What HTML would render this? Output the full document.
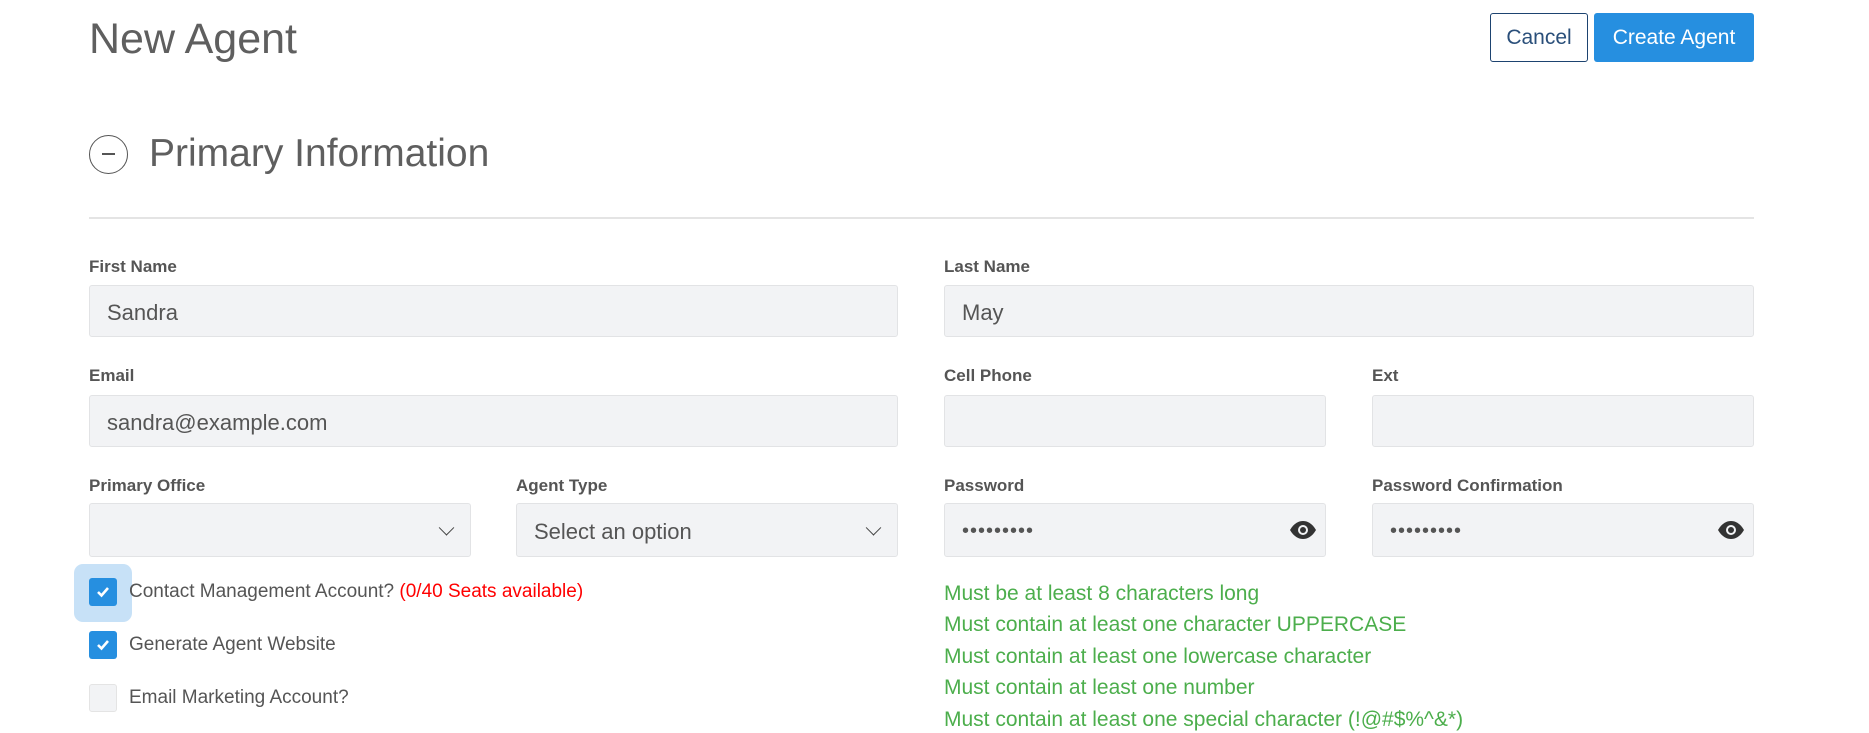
<!DOCTYPE html>
<html><head><meta charset="utf-8"><style>
*{box-sizing:border-box;margin:0;padding:0}
body{width:1869px;height:733px;background:#fff;font-family:"Liberation Sans",sans-serif;color:#555;position:relative;overflow:hidden}
.a{position:absolute}
.lbl{position:absolute;font-size:17px;font-weight:bold;color:#555;line-height:20px;transform:translateY(-9px)}
.inp{position:absolute;background:#f2f3f5;border:1px solid #e2e3e5;border-radius:3px;font-size:22px;color:#555;padding-left:17px;padding-top:3px;display:flex;align-items:center}
.chev{position:absolute;right:18px;top:50%;width:11px;height:11px;border-right:1.6px solid #444;border-bottom:1.6px solid #444;transform:translateY(-70%) rotate(45deg)}
.g{position:absolute;left:944px;font-size:21px;color:#4cae4c;line-height:24px;transform:translateY(-11px)}
.cb{position:absolute;left:89px;width:28px;height:28px;border-radius:3px;background:#268fe0;display:flex;align-items:center;justify-content:center}
.ct{position:absolute;left:129px;font-size:19px;color:#555;line-height:22px}
.eye{position:absolute;right:8px;top:50%;transform:translateY(-50%)}
</style></head><body>
<div class="a" style="left:89px;top:15px;font-size:43px;color:#5f5f5f;line-height:48px">New Agent</div>
<div class="a" style="left:1490px;top:13px;width:98px;height:49px;border:1px solid #1d4370;border-radius:3px;color:#2a4f7a;font-size:21px;display:flex;align-items:center;justify-content:center">Cancel</div>
<div class="a" style="left:1594px;top:13px;width:160px;height:49px;background:#268fe0;border-radius:3px;color:#fff;font-size:21px;display:flex;align-items:center;justify-content:center">Create Agent</div>
<div class="a" style="left:89px;top:135px;width:39px;height:39px;border:1.5px solid #555;border-radius:50%"></div>
<div class="a" style="left:102px;top:153px;width:13px;height:2px;background:#555"></div>
<div class="a" style="left:149px;top:132px;font-size:39px;color:#5f5f5f;line-height:44px">Primary Information</div>
<div class="a" style="left:89px;top:217px;width:1665px;height:2px;background:#e4e4e4"></div>

<div class="lbl" style="left:89px;top:266px">First Name</div>
<div class="inp" style="left:89px;top:285px;width:809px;height:52px">Sandra</div>
<div class="lbl" style="left:944px;top:266px">Last Name</div>
<div class="inp" style="left:944px;top:285px;width:810px;height:52px">May</div>

<div class="lbl" style="left:89px;top:375px">Email</div>
<div class="inp" style="left:89px;top:395px;width:809px;height:52px">sandra@example.com</div>
<div class="lbl" style="left:944px;top:375px">Cell Phone</div>
<div class="inp" style="left:944px;top:395px;width:382px;height:52px"></div>
<div class="lbl" style="left:1372px;top:375px">Ext</div>
<div class="inp" style="left:1372px;top:395px;width:382px;height:52px"></div>

<div class="lbl" style="left:89px;top:485px">Primary Office</div>
<div class="inp" style="left:89px;top:503px;width:382px;height:54px"><span class="chev"></span></div>
<div class="lbl" style="left:516px;top:485px">Agent Type</div>
<div class="inp" style="left:516px;top:503px;width:382px;height:54px">Select an option<span class="chev"></span></div>
<div class="lbl" style="left:944px;top:485px">Password</div>
<div class="inp" style="left:944px;top:503px;width:382px;height:54px;font-size:20px;letter-spacing:1px">•••••••••<svg class="eye" width="28" height="20" viewBox="0 0 28 20"><path d="M1 10C5 3 10 1 14 1s9 2 13 9c-4 7-9 9-13 9S5 17 1 10z" fill="#333"/><circle cx="14" cy="10" r="5" fill="#f2f3f5"/><circle cx="14" cy="10" r="3" fill="#333"/></svg></div>
<div class="lbl" style="left:1372px;top:485px">Password Confirmation</div>
<div class="inp" style="left:1372px;top:503px;width:382px;height:54px;font-size:20px;letter-spacing:1px">•••••••••<svg class="eye" width="28" height="20" viewBox="0 0 28 20"><path d="M1 10C5 3 10 1 14 1s9 2 13 9c-4 7-9 9-13 9S5 17 1 10z" fill="#333"/><circle cx="14" cy="10" r="5" fill="#f2f3f5"/><circle cx="14" cy="10" r="3" fill="#333"/></svg></div>

<div class="a" style="left:74px;top:564px;width:58px;height:58px;border-radius:9px;background:#c7e1f7"></div>
<div class="cb" style="top:578px"><svg width="14" height="12" viewBox="0 0 14 12"><path d="M2 6l3.5 3.5L12 2" stroke="#fff" stroke-width="2.6" fill="none"/></svg></div>
<div class="ct" style="top:581px">Contact Management Account? <span style="color:#f00">(0/40 Seats available)</span></div>
<div class="cb" style="top:631px"><svg width="14" height="12" viewBox="0 0 14 12"><path d="M2 6l3.5 3.5L12 2" stroke="#fff" stroke-width="2.6" fill="none"/></svg></div>
<div class="ct" style="top:634px">Generate Agent Website</div>
<div class="cb" style="top:684px;background:#f2f3f5;border:1px solid #e4e4e4"></div>
<div class="ct" style="top:687px">Email Marketing Account?</div>

<div class="g" style="top:593px">Must be at least 8 characters long</div>
<div class="g" style="top:624px">Must contain at least one character UPPERCASE</div>
<div class="g" style="top:656px">Must contain at least one lowercase character</div>
<div class="g" style="top:687px">Must contain at least one number</div>
<div class="g" style="top:719px">Must contain at least one special character (!@#$%^&amp;*)</div>
</body></html>
